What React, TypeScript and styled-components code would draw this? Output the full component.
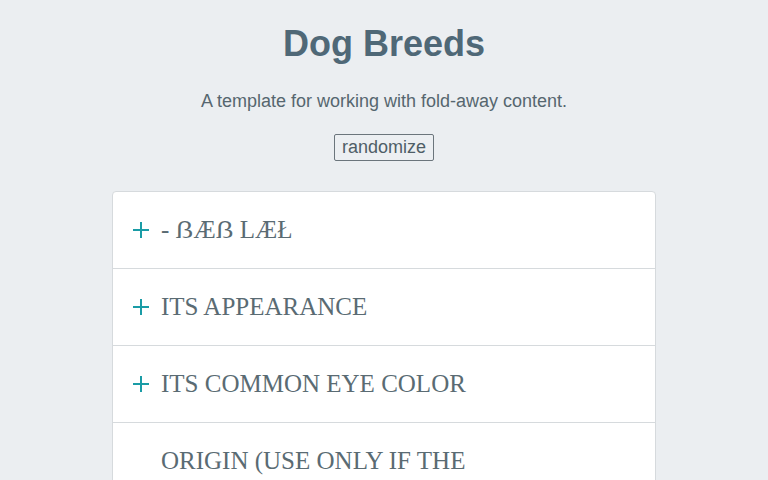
import React, { useState } from 'react';
import styled, { createGlobalStyle } from 'styled-components';

const GlobalStyle = createGlobalStyle`
  body {
    margin: 0;
    background: #ebeef1;
    font-family: "Liberation Sans", Arial, sans-serif;
    color: #4e6673;
  }
`;

const items = [
  { id: 1, title: '- ẞÆẞ LÆŁ' },
  { id: 2, title: 'ITS APPEARANCE' },
  { id: 3, title: 'ITS COMMON EYE COLOR' },
  { id: 4, title: 'ORIGIN (USE ONLY IF THE BREED IS KNOWN TO COME FROM ONE PLACE)' },
];

const App: React.FC = () => {
  const [open, setOpen] = useState<number | null>(null);

  return (
    <>
      <GlobalStyle />
      <Page>
        <Title>Dog Breeds</Title>
        <Subtitle>A template for working with fold-away content.</Subtitle>
        <RandomButton>randomize</RandomButton>
        <Accordion>
          {items.map((item) => (
            <Item key={item.id}>
              <Header onClick={() => setOpen(open === item.id ? null : item.id)}>
                <PlusIcon viewBox="0 0 16 16">
                  <path d="M8 0v16M0 8h16" />
                </PlusIcon>
                <HeaderText>{item.title}</HeaderText>
              </Header>
            </Item>
          ))}
        </Accordion>
      </Page>
    </>
  );
};

export default App;

const Page = styled.div`
  display: flex;
  flex-direction: column;
  align-items: center;
  padding-top: 22px;
`;

const Title = styled.h1`
  margin: 0;
  font-size: 36px;
  line-height: 44px;
  font-weight: 700;
  color: #4f6877;
`;

const Subtitle = styled.p`
  margin: 24px 0 0;
  font-size: 18px;
  line-height: 22px;
  color: #56666f;
`;

const RandomButton = styled.button`
  margin-top: 22px;
  height: 27px;
  padding: 0 7px;
  font-family: "Liberation Sans", Arial, sans-serif;
  font-size: 18px;
  color: #4f5e67;
  background: #eceff2;
  border: 1px solid #6b757c;
  border-radius: 2px;
  cursor: pointer;
`;

const Accordion = styled.div`
  margin-top: 30px;
  width: 542px;
  background: #fff;
  border: 1px solid #d6dadd;
  border-radius: 4px;
`;

const Item = styled.div`
  & + & {
    border-top: 1px solid #d6dadd;
  }
`;

const Header = styled.div`
  display: flex;
  align-items: center;
  gap: 12px;
  padding: 23px 20px;
  cursor: pointer;
`;

const PlusIcon = styled.svg`
  flex: none;
  width: 16px;
  height: 16px;
  stroke: #1a9ca6;
  stroke-width: 2;
  fill: none;
`;

const HeaderText = styled.span`
  max-width: 370px;
  font-family: "Liberation Serif", "Times New Roman", serif;
  font-size: 25px;
  line-height: 30px;
  color: #5a6b73;
`;
